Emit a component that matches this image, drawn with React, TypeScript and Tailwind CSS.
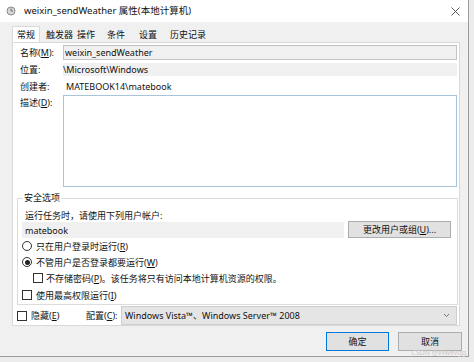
import React from "react";

const font = { fontFamily: '"Noto Sans", "Noto Sans CJK SC", sans-serif' };

function Radio({ checked }: { checked?: boolean }) {
  return (
    <span className="w-[10px] h-[10px] rounded-full border border-[#333] flex items-center justify-center bg-white shrink-0">
      {checked && <span className="w-[5px] h-[5px] rounded-full bg-[#222]" />}
    </span>
  );
}

function Check() {
  return <span className="w-[10px] h-[10px] border border-[#333] bg-white shrink-0" />;
}

export default function App() {
  return (
    <div className="w-[474px] h-[362px] bg-[#ececec] overflow-hidden text-[9px] leading-none text-[#111]" style={font}>
      <div className="w-[469px] h-[357px] bg-[#f0f0f0] border-r border-b border-[#9a9a9a] flex flex-col">
        {/* title bar */}
        <div className="h-[22px] bg-white flex items-center pl-[6px] pr-[8px]">
          <svg width="10" height="10" viewBox="0 0 10 10" className="shrink-0">
            <circle cx="5" cy="5" r="4" fill="#d8d8d8" stroke="#8a8a8a" strokeWidth="1" />
            <path d="M5 2.5V5h2" stroke="#555" strokeWidth="0.8" fill="none" />
          </svg>
          <span className="ml-[8px] text-[9.5px]">weixin_sendWeather 属性(本地计算机)</span>
          <svg width="9" height="9" viewBox="0 0 9 9" className="ml-auto">
            <path d="M0.5 0.5l8 8M8.5 0.5l-8 8" stroke="#333" strokeWidth="0.8" />
          </svg>
        </div>

        <div className="flex-1 pl-[12px] flex flex-col">
          {/* tabs */}
          <div className="h-[20px] flex items-end">
            <div className="h-[16px] w-[28px] bg-white border border-b-0 border-[#d9d9d9] flex items-center justify-center">常规</div>
            <span className="h-[16px] flex items-center ml-[6px]">触发器</span>
            <span className="h-[16px] flex items-center ml-[4px]">操作</span>
            <span className="h-[16px] flex items-center ml-[12px]">条件</span>
            <span className="h-[16px] flex items-center ml-[14px]">设置</span>
            <span className="h-[16px] flex items-center ml-[13px]">历史记录</span>
          </div>

          {/* panel */}
          <div className="w-[448px] h-[284px] bg-white border border-[#d9d9d9] pl-[7px] pr-[2px] pt-[2px] flex flex-col">
            <div className="flex items-center h-[15px]">
              <span className="w-[43px]">名称(<u>M</u>):</span>
              <div className="flex-1 h-[15px] bg-[#f0f0f0] border border-[#c4c4c4] flex items-center pl-[1px]">weixin_sendWeather</div>
            </div>
            <div className="flex items-center h-[13px] mt-[3px]">
              <span className="w-[43px]">位置:</span>
              <div className="flex-1 h-[13px] bg-[#f0f0f0] flex items-center">\Microsoft\Windows</div>
            </div>
            <div className="flex items-center h-[14px] mt-[3px]">
              <span className="w-[43px]">创建者:</span>
              <span className="pl-[3px]">MATEBOOK14\matebook</span>
            </div>
            <div className="flex mt-[2px]">
              <span className="w-[43px] pt-[3px]">描述(<u>D</u>):</span>
              <div className="flex-1 h-[92px] bg-white border border-[#a7c4da]" />
            </div>

            {/* security group */}
            <fieldset className="mt-[5px] ml-[-3px] mr-[1px] border border-[#dcdcdc] pl-[4px] pr-[6px] pb-[3px] flex flex-col">
              <legend className="h-[12px] leading-[12px] px-[1px] ml-[1px]">安全选项</legend>
              <div className="mt-[5px] h-[12px] flex items-center pl-[3px]">运行任务时，请使用下列用户帐户:</div>
              <div className="flex items-end h-[17px]">
                <div className="w-[322px] h-[16px] bg-[#f0f0f0] flex items-center pl-[3px]">matebook</div>
                <div className="ml-[4px] w-[103px] h-[17px] bg-[#e1e1e1] border border-[#adadad] flex items-center justify-center">更改用户或组(<u>U</u>)...</div>
              </div>
              <div className="flex items-center gap-[4px] mt-[2px] h-[12px]">
                <Radio />
                <span>只在用户登录时运行(<u>R</u>)</span>
              </div>
              <div className="flex items-center gap-[4px] mt-[4px] h-[12px]">
                <Radio checked />
                <span>不管用户是否登录都要运行(<u>W</u>)</span>
              </div>
              <div className="flex items-center gap-[3px] mt-[4px] h-[12px] pl-[11px]">
                <Check />
                <span>不存储密码(<u>P</u>)。该任务将只有访问本地计算机资源的权限。</span>
              </div>
              <div className="flex items-center gap-[4px] mt-[5px] h-[12px]">
                <Check />
                <span>使用最高权限运行(<u>I</u>)</span>
              </div>
            </fieldset>

            <div className="flex items-center h-[19px] mt-[1px]">
              <div className="ml-[-3px] flex items-center gap-[4px] w-[69px]">
                <Check />
                <span>隐藏(<u>E</u>)</span>
              </div>
              <span className="w-[35px]">配置(<u>C</u>):</span>
              <div className="flex-1 h-[19px] bg-[#e5e5e5] border border-[#cfcfcf] flex items-center pl-[3px] pr-[6px]">
                <span>Windows Vista™、Windows Server™ 2008</span>
                <svg width="7" height="5" viewBox="0 0 7 5" className="ml-auto">
                  <path d="M1 1l2.5 2.5L6 1" stroke="#555" strokeWidth="0.8" fill="none" />
                </svg>
              </div>
            </div>
          </div>

          {/* dialog buttons */}
          <div className="flex items-center mt-[6px] pr-[6px] justify-end gap-[9px] relative">
            <div className="w-[63px] h-[19px] bg-[#e1e1e1] border border-[#0078d7] flex items-center justify-center">确定</div>
            <div className="w-[64px] h-[19px] bg-[#e1e1e1] border border-[#adadad] flex items-center justify-center">取消</div>
            <span className="absolute right-[2px] top-[17px] text-[7px] text-[#c8c8c8]">CSDN @Wwevgg</span>
          </div>
        </div>
      </div>
    </div>
  );
}
